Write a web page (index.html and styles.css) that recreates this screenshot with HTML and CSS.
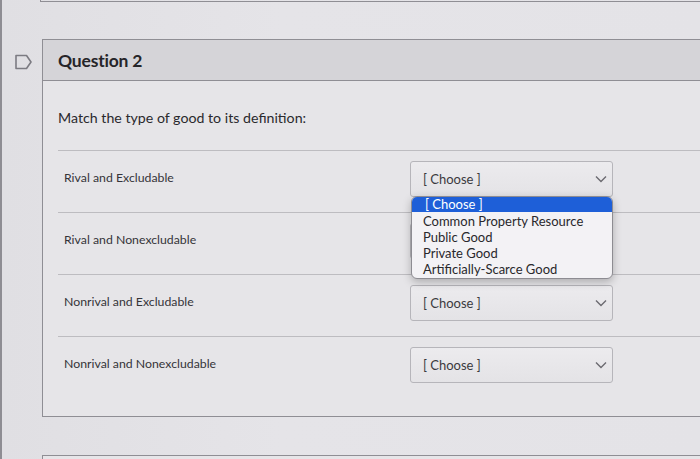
FILE: index.html
```html
<!DOCTYPE html>
<html lang="en">
<head>
<meta charset="utf-8">
<title>Question 2</title>
<link rel="stylesheet" href="styles.css">
</head>
<body>
<div class="screen">
  <div class="prev-card"></div>

  <div class="question">
    <div class="gutter">
      <svg class="flag" width="19" height="16" viewBox="0 0 19 16" aria-hidden="true">
        <path d="M2 1.5 H12.5 L17 8 L12.5 14.5 H2 Z" fill="none" stroke="#7c7b82" stroke-width="1.6" stroke-linejoin="round"/>
      </svg>
    </div>
    <div class="card">
      <div class="card-header"><h2 class="title">Question 2</h2></div>
      <div class="card-body">
        <p class="prompt">Match the type of good to its definition:</p>

        <div class="match-row">
          <span class="label">Rival and Excludable</span>
          <div class="select-wrap">
            <div class="select"><span>[ Choose ]</span>
              <svg class="chev" width="12" height="8" viewBox="0 0 12 8"><path d="M1 1.5 L6 6.5 L11 1.5" fill="none" stroke="#6b6a70" stroke-width="1.4"/></svg>
            </div>
            <ul class="dropdown">
              <li class="active">[ Choose ]</li>
              <li>Common Property Resource</li>
              <li>Public Good</li>
              <li>Private Good</li>
              <li>Artificially-Scarce Good</li>
            </ul>
          </div>
        </div>

        <div class="match-row">
          <span class="label">Rival and Nonexcludable</span>
          <div class="select-wrap">
            <div class="select covered"><span>[ Choose ]</span>
              <svg class="chev" width="12" height="8" viewBox="0 0 12 8"><path d="M1 1.5 L6 6.5 L11 1.5" fill="none" stroke="#6b6a70" stroke-width="1.4"/></svg>
            </div>
          </div>
        </div>

        <div class="match-row">
          <span class="label">Nonrival and Excludable</span>
          <div class="select-wrap">
            <div class="select"><span>[ Choose ]</span>
              <svg class="chev" width="12" height="8" viewBox="0 0 12 8"><path d="M1 1.5 L6 6.5 L11 1.5" fill="none" stroke="#6b6a70" stroke-width="1.4"/></svg>
            </div>
          </div>
        </div>

        <div class="match-row">
          <span class="label">Nonrival and Nonexcludable</span>
          <div class="select-wrap">
            <div class="select"><span>[ Choose ]</span>
              <svg class="chev" width="12" height="8" viewBox="0 0 12 8"><path d="M1 1.5 L6 6.5 L11 1.5" fill="none" stroke="#6b6a70" stroke-width="1.4"/></svg>
            </div>
          </div>
        </div>
      </div>
    </div>
  </div>

  <div class="question next">
    <div class="gutter"></div>
    <div class="card stub"></div>
  </div>
</div>
</body>
</html>
```

FILE: styles.css
```css
* { box-sizing: border-box; }

html, body {
  margin: 0;
  padding: 0;
  height: 459px;
  overflow: hidden;
  background: #e3e2e6;
}

body {
  font-family: Lato, "Open Sans", "Liberation Sans", sans-serif;
  color: #2e2d31;
}

.screen {
  width: 700px;
  height: 459px;
  border-left: 2px solid #8e8d93;
  background: linear-gradient(90deg, #e0dfe3 0%, #e5e4e8 40%, #e4e3e7 100%);
}

.prev-card {
  height: 2px;
  margin-left: 38px;
  border-left: 1px solid #8f8e94;
  border-bottom: 1px solid #8f8e94;
}

.question {
  display: flex;
  margin-top: 37px;
}

.question.next {
  margin-top: 38px;
}

.gutter {
  width: 40px;
  flex: none;
  padding: 15px 0 0 12px;
}

.flag { display: block; }

.card {
  flex: 1;
  border: 1px solid #8f8e94;
  border-right: none;
  background: #e6e5e8;
}

.card.stub {
  height: 10px;
  border-bottom: none;
}

.card-header {
  height: 41px;
  background: #d5d4d8;
  border-bottom: 1px solid #8f8e94;
  display: flex;
  align-items: center;
  padding-left: 15px;
}

.title {
  margin: 0;
  font-size: 17.5px;
  font-weight: 700;
  color: #262529;
  letter-spacing: -0.2px;
}

.card-body {
  padding: 0 0 18px 15px;
}

.prompt {
  margin: 0;
  padding: 27px 0 22px;
  line-height: 20px;
  font-size: 14.2px;
  color: #2a292d;
}

.match-row {
  display: grid;
  grid-template-columns: 352px 203px;
  align-items: center;
  border-top: 1px solid #bdbcc0;
  padding: 10px 0 15px;
}

.label {
  padding-left: 6px;
  font-size: 12.3px;
  color: #353438;
  margin-top: -4px;
}

.select-wrap {
  position: relative;
}

.select {
  height: 36px;
  display: flex;
  align-items: center;
  justify-content: space-between;
  padding: 0 5px 0 12px;
  border: 1px solid #b6b5ba;
  border-radius: 3px;
  background: linear-gradient(180deg, #ecebee, #e4e3e6);
  font-size: 13px;
  color: #3b3a3e;
}

.select.covered span,
.select.covered .chev {
  visibility: hidden;
}

.dropdown {
  position: absolute;
  left: 1px;
  right: 0;
  top: 35px;
  margin: 0;
  padding: 0 0 1px;
  list-style: none;
  background: #f3f2f5;
  border: 1px solid #8d8c92;
  border-radius: 6px;
  box-shadow: 0 3px 8px rgba(0, 0, 0, 0.25);
  z-index: 2;
  font-size: 13px;
  color: #29282c;
  overflow: hidden;
}

.dropdown li {
  line-height: 16px;
  padding-left: 11px;
}

.dropdown li.active {
  background: #1e5fd8;
  color: #ffffff;
  line-height: 15px;
  padding-left: 13px;
  margin-bottom: 1px;
}
```
